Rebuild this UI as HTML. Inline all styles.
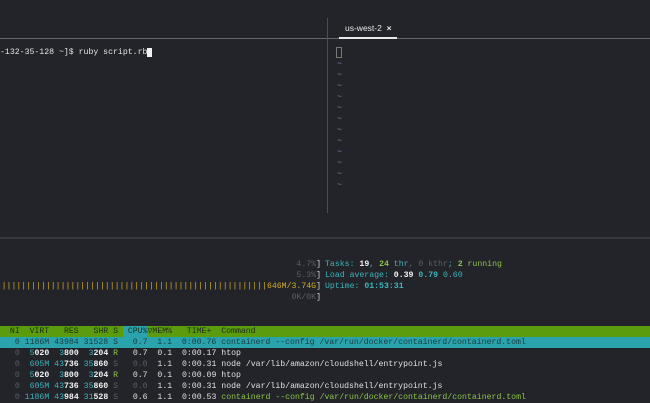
<!DOCTYPE html>
<html><head><meta charset="utf-8"><style>
body{margin:0;width:650px;height:400px;background:#222429;overflow:hidden;position:relative;font-family:"Liberation Mono","DejaVu Sans Mono",monospace;font-size:8.2px;color:#d8d8d8}
.a{position:absolute;white-space:pre;line-height:11px}
.d{color:#5a5e66}.c{color:#3fb4bd}.w{color:#f2f2f2;font-weight:bold}.g{color:#8bc34a}.y{color:#d4ad2c}.b{color:#e0e0e0}
</style></head><body>
<div style="position:absolute;left:0;top:38px;width:650px;height:1px;background:#63666c"></div>
<div style="position:absolute;left:327px;top:18px;width:1px;height:195px;background:#4a4d53"></div>
<div class="a" style="left:345px;top:23px;font-family:'Liberation Sans',sans-serif;font-size:8.5px;color:#e8e8e8">us-west-2&nbsp;&nbsp;<b>×</b></div>
<div style="position:absolute;left:339px;top:37px;width:58px;height:2px;background:#e8e8e8"></div>
<div class="a" style="left:0;top:47px;color:#e4e4e4">-132-35-128 ~]$ ruby script.rb<span style="background:#f2f2f2">&nbsp;</span></div>
<div style="position:absolute;left:336px;top:47px;width:4px;height:9px;border:1px solid #777"></div>
<div class="a" style="left:337px;top:59px;color:#6f8fb8">~
~
~
~
~
~
~
~
~
~
~
~</div>
<div style="position:absolute;left:0;top:237px;width:650px;height:2px;background:#34373d"></div>
<div class="a" style="left:0;top:259px;width:321px;text-align:right;overflow:hidden"><span class="d">4.7%</span>]
<span class="d">5.3%</span>]
<span class="y">||||||||||||||||||||||||||||||||||||||||||||||||||||||646M/3.74G</span>]
<span class="d">0K/0K</span>]</div>
<div class="a" style="left:325px;top:259px"><span class="c">Tasks: </span><span class="w">19</span><span class="c">, </span><span class="g" style="font-weight:bold">24</span><span class="c"> thr</span><span class="d">, 0 kthr</span><span class="c">; </span><span class="g" style="font-weight:bold">2</span><span class="g"> running</span>
<span class="c">Load average: </span><span class="w">0.39</span> <span class="c" style="font-weight:bold">0.79</span> <span class="c">0.60</span>
<span class="c">Uptime: </span><span class="c" style="font-weight:bold">01:53:31</span></div>
<div style="position:absolute;left:0;top:326px;width:650px;height:11px;background:#5b9c0e"></div>
<div style="position:absolute;left:123px;top:326px;width:25px;height:11px;background:#2aa3ad"></div>
<div style="position:absolute;left:0;top:337px;width:650px;height:11px;background:#2aa3ad"></div>
<div class="a" style="left:5px;top:326px;color:#1c2a1a"> NI  VIRT   RES   SHR S  CPU%▽MEM%   TIME+  Command</div>
<div class="a" style="left:5px;top:337px;color:#1b3b40">  0 1186M 43984 31528 S   0.7  1.1  0:00.76 containerd --config /var/run/docker/containerd/containerd.toml</div>
<div class="a" style="left:5px;top:348px"><span class="d">  0</span>  <span class="c">5</span><span class="w">020</span>  <span class="c">3</span><span class="w">800</span>  <span class="c">3</span><span class="w">204</span> <span class="g">R</span>   <span class="b">0.7  0.1  0:00.17 htop</span>
<span class="d">  0</span>  <span class="c">605M</span> <span class="c">43</span><span class="w">736</span> <span class="c">35</span><span class="w">860</span> <span class="d">S</span>   <span class="d">0.0</span>  <span class="b">1.1  0:00.31 node /var/lib/amazon/cloudshell/entrypoint.js</span>
<span class="d">  0</span>  <span class="c">5</span><span class="w">020</span>  <span class="c">3</span><span class="w">800</span>  <span class="c">3</span><span class="w">204</span> <span class="g">R</span>   <span class="b">0.7  0.1  0:00.09 htop</span>
<span class="d">  0</span>  <span class="c">605M</span> <span class="c">43</span><span class="w">736</span> <span class="c">35</span><span class="w">860</span> <span class="d">S</span>   <span class="d">0.0</span>  <span class="b">1.1  0:00.31 node /var/lib/amazon/cloudshell/entrypoint.js</span>
<span class="d">  0</span> <span class="c">1186M</span> <span class="c">43</span><span class="w">984</span> <span class="c">31</span><span class="w">528</span> <span class="d">S</span>   <span class="b">0.6  1.1  0:00.53</span> <span class="g">containerd --config /var/run/docker/containerd/containerd.toml</span></div>
</body></html>
